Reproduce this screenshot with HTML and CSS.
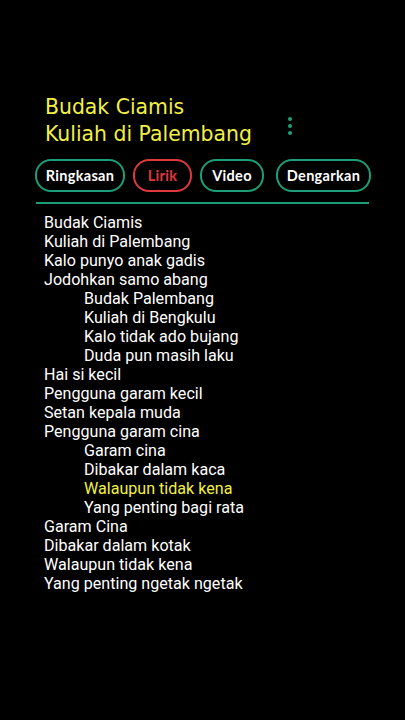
FILE: index.html
```html
<!DOCTYPE html>
<html>
<head>
<meta charset="utf-8">
<link rel="stylesheet" href="styles.css">
</head>
<body>
<div class="screen">
  <header class="head">
    <div class="title">
      <div>Budak Ciamis</div>
      <div>Kuliah di Palembang</div>
    </div>
    <div class="more"><span></span><span></span><span></span></div>
  </header>
  <nav class="tabs">
    <span class="tab t1">Ringkasan</span>
    <span class="tab t2 active">Lirik</span>
    <span class="tab t3">Video</span>
    <span class="tab t4">Dengarkan</span>
  </nav>
  <div class="rule"></div>
  <div class="lyrics">
    <p>Budak Ciamis</p>
    <p>Kuliah di Palembang</p>
    <p>Kalo punyo anak gadis</p>
    <p>Jodohkan samo abang</p>
    <p class="in">Budak Palembang</p>
    <p class="in">Kuliah di Bengkulu</p>
    <p class="in">Kalo tidak ado bujang</p>
    <p class="in">Duda pun masih laku</p>
    <p>Hai si kecil</p>
    <p>Pengguna garam kecil</p>
    <p>Setan kepala muda</p>
    <p>Pengguna garam cina</p>
    <p class="in">Garam cina</p>
    <p class="in">Dibakar dalam kaca</p>
    <p class="in hl">Walaupun tidak kena</p>
    <p class="in">Yang penting bagi rata</p>
    <p>Garam Cina</p>
    <p>Dibakar dalam kotak</p>
    <p>Walaupun tidak kena</p>
    <p>Yang penting ngetak ngetak</p>
  </div>
</div>
</body>
</html>
```
FILE: styles.css
```css
html, body {
  margin: 0;
  padding: 0;
  background: #000;
}
.screen {
  width: 405px;
  height: 720px;
  background: #000;
  padding: 94px 0 0 0;
  box-sizing: border-box;
}
.head {
  display: flex;
  align-items: center;
  padding: 0 0 0 45px;
}
.title {
  font-family: "DejaVu Sans", sans-serif;
  color: #f2f046;
  font-size: 20.4px;
  line-height: 27px;
  font-weight: 400;
  width: 240px;
}
.more {
  display: flex;
  flex-direction: column;
  gap: 3px;
  margin: 10px 0 0 3px;
}
.more span {
  width: 4px;
  height: 4px;
  border-radius: 50%;
  background: #1fa07c;
}
.tabs {
  display: flex;
  margin: 11px 0 0 35px;
}
.tab {
  box-sizing: border-box;
  height: 33px;
  border: 2px solid #1c9e78;
  border-radius: 16px;
  display: flex;
  align-items: center;
  justify-content: center;
  font-family: "Lato", "DejaVu Sans", sans-serif;
  font-weight: 700;
  font-size: 14.5px;
  color: #fff;
  letter-spacing: 0.3px;
}
.t1 { width: 90px; }
.t2 { width: 59px; margin-left: 8px; }
.t3 { width: 64px; margin-left: 8px; }
.t4 { width: 95px; margin-left: 12px; }
.tab.active {
  border-color: #e0383d;
  color: #e0383d;
}
.rule {
  margin: 10px 0 0 36px;
  width: 333px;
  height: 2px;
  background: #1c9e78;
}
.lyrics {
  margin: 9px 0 0 44px;
  font-family: "Roboto", "Liberation Sans", sans-serif;
  font-size: 16.1px;
  line-height: 19px;
  color: #fff;
}
.lyrics p {
  margin: 0;
}
.lyrics .in {
  padding-left: 40px;
}
.lyrics .hl {
  color: #f2f046;
}
```
